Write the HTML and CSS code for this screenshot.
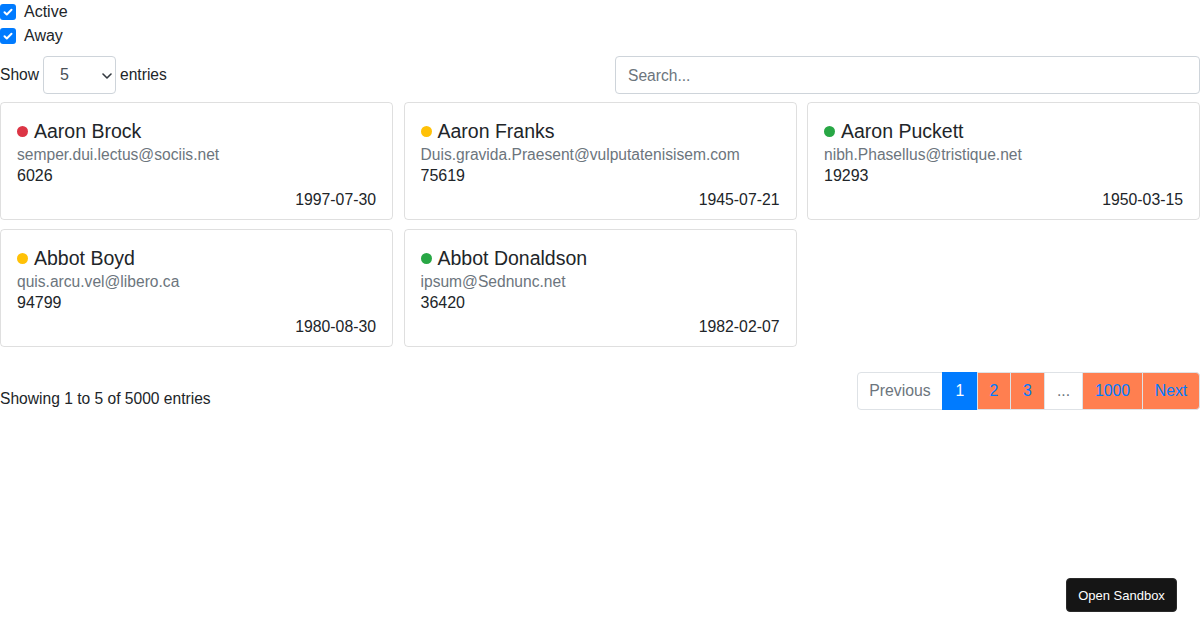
FILE: index.html
```html
<!DOCTYPE html>
<html>
<head>
<meta charset="utf-8">
<link rel="stylesheet" href="styles.css">
</head>
<body>
<div class="filters">
  <label class="check"><span class="box"><svg viewBox="0 0 16 16" width="16" height="16"><rect x="0" y="0" width="16" height="16" rx="3" fill="#007bff"/><path d="M4.5 8.2l2.3 2.3 4.7-4.8" fill="none" stroke="#fff" stroke-width="2" stroke-linecap="round" stroke-linejoin="round"/></svg></span>Active</label>
  <label class="check"><span class="box"><svg viewBox="0 0 16 16" width="16" height="16"><rect x="0" y="0" width="16" height="16" rx="3" fill="#007bff"/><path d="M4.5 8.2l2.3 2.3 4.7-4.8" fill="none" stroke="#fff" stroke-width="2" stroke-linecap="round" stroke-linejoin="round"/></svg></span>Away</label>
</div>
<div class="toolbar">
  <div class="length"><span class="lbl">Show</span><span class="select">5<svg class="chev" viewBox="0 0 10 6" width="10" height="6"><path d="M1 1l4 4 4-4" fill="none" stroke="#343a40" stroke-width="1.6" stroke-linecap="round" stroke-linejoin="round"/></svg></span><span class="lbl">entries</span></div>
  <div class="search">Search...</div>
</div>
<div class="grid">
  <div class="card">
    <div class="name"><span class="dot red"></span>Aaron Brock</div>
    <div class="email">semper.dui.lectus@sociis.net</div>
    <div class="num">6026</div>
    <div class="date">1997-07-30</div>
  </div>
  <div class="card">
    <div class="name"><span class="dot yellow"></span>Aaron Franks</div>
    <div class="email">Duis.gravida.Praesent@vulputatenisisem.com</div>
    <div class="num">75619</div>
    <div class="date">1945-07-21</div>
  </div>
  <div class="card">
    <div class="name"><span class="dot green"></span>Aaron Puckett</div>
    <div class="email">nibh.Phasellus@tristique.net</div>
    <div class="num">19293</div>
    <div class="date">1950-03-15</div>
  </div>
  <div class="card">
    <div class="name"><span class="dot yellow"></span>Abbot Boyd</div>
    <div class="email">quis.arcu.vel@libero.ca</div>
    <div class="num">94799</div>
    <div class="date">1980-08-30</div>
  </div>
  <div class="card">
    <div class="name"><span class="dot green"></span>Abbot Donaldson</div>
    <div class="email">ipsum@Sednunc.net</div>
    <div class="num">36420</div>
    <div class="date">1982-02-07</div>
  </div>
</div>
<div class="footer">
  <div class="info">Showing 1 to 5 of 5000 entries</div>
  <div class="pager">
    <span class="pg prev">Previous</span>
    <span class="pg active">1</span>
    <span class="pg orange w2">2</span>
    <span class="pg orange w3">3</span>
    <span class="pg ell">...</span>
    <span class="pg orange w1000">1000</span>
    <span class="pg orange last">Next</span>
  </div>
</div>
<button class="sandbox">Open Sandbox</button>
</body>
</html>
```
FILE: styles.css
```css
html, body {
  margin: 0;
  padding: 0;
  background: #fff;
}
body {
  font-family: "Liberation Sans", Arial, sans-serif;
  font-size: 16px;
  color: #212529;
  width: 1200px;
  height: 630px;
  position: relative;
}
.filters {
  display: flex;
  flex-direction: column;
}
.check {
  display: flex;
  align-items: center;
  height: 24px;
  line-height: 24px;
}
.box {
  display: inline-flex;
  width: 16px;
  height: 16px;
  margin-right: 8px;
}
.toolbar {
  display: flex;
  justify-content: space-between;
  align-items: center;
  margin-top: 8px;
  height: 38px;
}
.length {
  display: flex;
  align-items: center;
  font-size: 15.6px;
}
.select {
  box-sizing: border-box;
  width: 73px;
  height: 38px;
  border: 1px solid #ced4da;
  border-radius: 4px;
  display: flex;
  align-items: center;
  padding-left: 16px;
  position: relative;
  color: #495057;
  margin: 0 4px 0 4px;
  font-size: 16px;
}
.chev {
  position: absolute;
  right: 3px;
  top: 16px;
}
.search {
  box-sizing: border-box;
  width: 585px;
  height: 38px;
  border: 1px solid #ced4da;
  border-radius: 4px;
  padding: 1px 12px 0;
  display: flex;
  align-items: center;
  color: #6c757d;
  font-size: 15.6px;
}
.grid {
  display: grid;
  grid-template-columns: repeat(3, 1fr);
  column-gap: 10.5px;
  row-gap: 9px;
  margin-top: 8px;
}
.card {
  box-sizing: border-box;
  height: 118px;
  border: 1px solid rgba(0,0,0,0.125);
  border-radius: 4px;
  padding: 16px 16px 0;
}
.name {
  font-size: 19.5px;
  line-height: 24px;
  height: 24px;
  display: flex;
  align-items: center;
}
.dot {
  width: 11px;
  height: 11px;
  border-radius: 50%;
  margin-right: 6px;
  display: inline-block;
}
.red { background: #dc3545; }
.yellow { background: #ffc107; }
.green { background: #28a745; }
.email {
  color: #6c757d;
  line-height: 22px;
  font-size: 15.6px;
  margin-top: 1px;
}
.num {
  line-height: 20px;
}
.date {
  text-align: right;
  line-height: 24px;
  margin-top: 2px;
  font-size: 15.8px;
}
.footer {
  display: flex;
  justify-content: space-between;
  align-items: flex-start;
  margin-top: 25px;
}
.info {
  line-height: 24px;
  padding-top: 15px;
  font-size: 15.6px;
}
.pager {
  display: flex;
  font-size: 15.8px;
}
.pg {
  box-sizing: border-box;
  height: 38px;
  display: flex;
  align-items: center;
  justify-content: center;
  border: 1px solid #dee2e6;
  margin-left: -1px;
  color: #007bff;
}
.prev {
  color: #6c757d;
  border-radius: 4px 0 0 4px;
  margin-left: 0;
  width: 86px;
}
.active {
  background: #007bff;
  border-color: #007bff;
  color: #fff;
  width: 36px;
}
.orange {
  background: #ff7f50;
}
.w2 { width: 34px; }
.w3 { width: 35px; }
.ell {
  color: #6c757d;
  width: 39px;
}
.w1000 { width: 61px; }
.last {
  width: 58px;
  border-radius: 0 4px 4px 0;
}
.sandbox {
  position: absolute;
  left: 1066px;
  top: 578px;
  width: 111px;
  height: 34px;
  background: #151515;
  color: #fff;
  border: 1px solid #2a2a2a;
  border-radius: 4px;
  font-family: "Liberation Sans", Arial, sans-serif;
  font-size: 13px;
  padding: 0;
}
```
